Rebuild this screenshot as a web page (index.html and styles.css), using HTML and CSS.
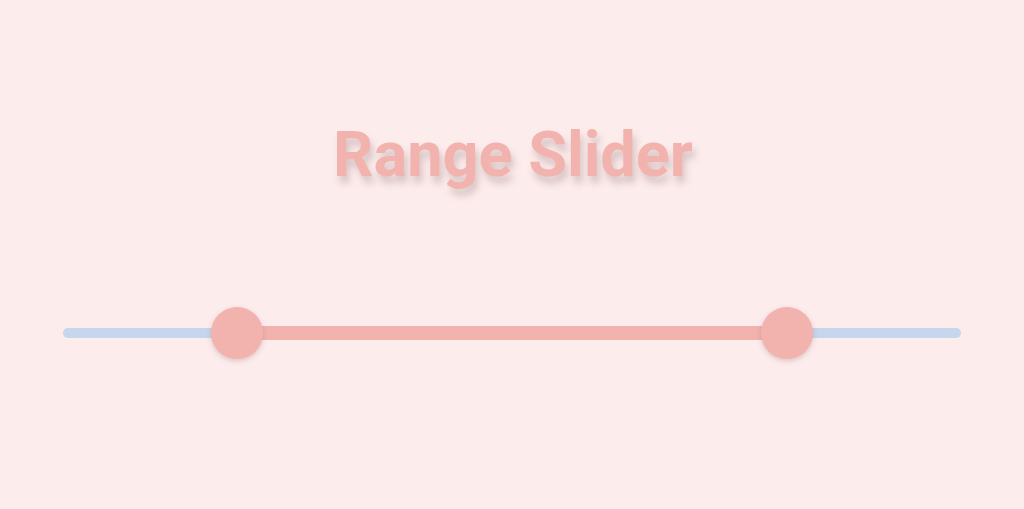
FILE: index.html
```html
<!DOCTYPE html>
<html lang="en">
<head>
<meta charset="utf-8">
<title>Range Slider</title>
<link rel="stylesheet" href="styles.css">
</head>
<body>
<main class="page">
  <h1 class="title">Range Slider</h1>
  <div class="slider">
    <div class="track">
      <div class="range" style="left: 19.4%; width: 61.2%;"></div>
      <span class="thumb" style="left: 19.4%;"></span>
      <span class="thumb" style="left: 80.6%;"></span>
    </div>
  </div>
</main>
</body>
</html>
```
FILE: styles.css
```css
* { box-sizing: border-box; }

html, body {
  margin: 0;
  height: 100%;
}

body {
  background: #fdecec;
  font-family: Roboto, "Liberation Sans", sans-serif;
}

.page {
  display: flex;
  flex-direction: column;
  align-items: center;
  padding-top: 117px;
}

.title {
  margin: 0 0 0 2px;
  font-size: 63px;
  font-weight: 700;
  line-height: 76px;
  color: #f2b3ae;
  text-shadow: 3px 7px 7px rgba(150, 120, 120, 0.35);
}

.slider {
  width: 100%;
  padding: 0 63px;
  margin-top: 135px;
}

.track {
  position: relative;
  height: 10px;
  border-radius: 5px;
  background: #c6d6ec;
}

.range {
  position: absolute;
  top: -2px;
  height: 14px;
  background: #f2b3ae;
}

.thumb {
  position: absolute;
  top: 50%;
  width: 52px;
  height: 52px;
  margin: -26px 0 0 -26px;
  border-radius: 50%;
  background: #f2b3ae;
  box-shadow: 0 2px 5px rgba(150, 100, 100, 0.3);
}
```
